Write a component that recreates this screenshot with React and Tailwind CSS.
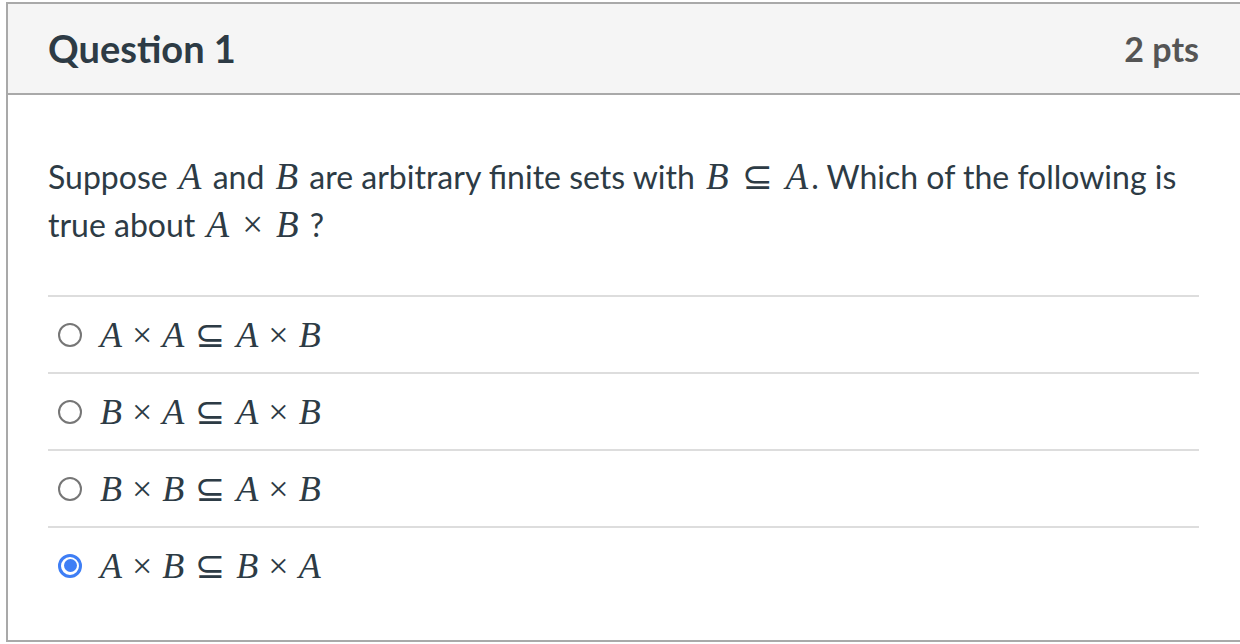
import React from "react";

const M = ({ children }) => (
  <span className="italic [font-family:'Liberation_Serif',serif]">{children}</span>
);
const Bin = ({ children }) => (
  <span className="[font-family:'Liberation_Serif',serif] mx-[10px]">{children}</span>
);
const Rel = ({ children }) => (
  <span className="[font-family:'Liberation_Serif',serif] mx-[11px]">{children}</span>
);

function Expr({ a, b, c, d }) {
  return (
    <span className="text-[36px] text-[#2d3b45] [font-family:'Liberation_Serif',serif] leading-none">
      <M>{a}</M>
      <Bin>×</Bin>
      <M>{b}</M>
      <Rel>⊆</Rel>
      <M>{c}</M>
      <Bin>×</Bin>
      <M>{d}</M>
    </span>
  );
}

function Radio({ checked }) {
  if (checked) {
    return (
      <div className="w-[24px] h-[24px] rounded-full border-[3px] border-[#3e7ef5] flex items-center justify-center">
        <div className="w-[13px] h-[13px] rounded-full bg-[#3e7ef5]" />
      </div>
    );
  }
  return <div className="w-[24px] h-[24px] rounded-full border-2 border-[#767676] bg-white" />;
}

const options = [
  ["A", "A", "A", "B", false],
  ["B", "A", "A", "B", false],
  ["B", "B", "A", "B", false],
  ["A", "B", "B", "A", true],
];

const mi = "italic text-[37px] [font-family:'Liberation_Serif',serif] leading-none mx-[3px]";
const mo = "text-[37px] [font-family:'Liberation_Serif',serif] leading-none";

export default function App() {
  return (
    <div className="w-[1240px] h-[644px] overflow-hidden bg-white [font-family:Lato,sans-serif]">
      <div className="ml-[6px] mt-[2px] w-[1240px] h-[640px] border-2 border-[#a9a9a9] flex flex-col">
        <div className="h-[91px] bg-[#f5f5f5] border-b-2 border-[#a9a9a9] flex items-center justify-between pl-[40px] pr-[45px]">
          <div className="text-[38px] font-bold text-[#2d3b45]">Question 1</div>
          <div className="text-[34px] font-bold text-[#555555]">2 pts</div>
        </div>
        <div className="pl-[40px] pr-[45px] pt-[58px]">
          <div className="text-[32px] leading-[48px] text-[#2d3b45]">
            Suppose <span className={mi}>A</span> and <span className={mi}>B</span> are arbitrary finite sets with{" "}
            <span className={mi}>B</span>
            <span className={`${mo} mx-[10px]`}>⊆</span>
            <span className={mi}>A</span>. Which of the following is{" "}
            <br />
            true about <span className={mi}>A</span>
            <span className={`${mo} mx-[10px]`}>×</span>
            <span className={mi}>B</span> ?
          </div>
          <div className="mt-[46px]">
            {options.map(([a, b, c, d, checked], i) => (
              <div key={i} className="border-t-2 border-[#dddddd] h-[77px] flex items-center pl-[10px] gap-[18px]">
                <Radio checked={checked} />
                <Expr a={a} b={b} c={c} d={d} />
              </div>
            ))}
          </div>
        </div>
      </div>
    </div>
  );
}
